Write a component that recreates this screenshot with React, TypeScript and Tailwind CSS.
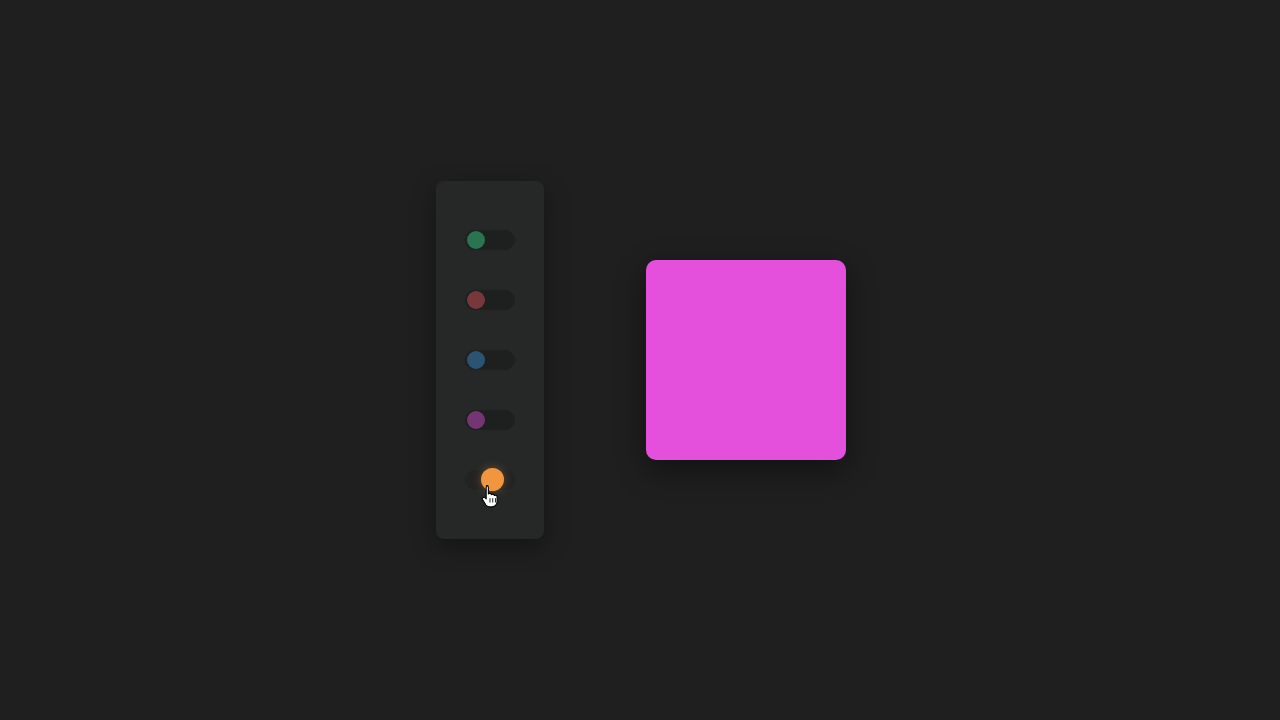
import React from 'react';

const knobs = [
    { id: 'green', color: 'bg-[#2a7452]' },
    { id: 'red', color: 'bg-[#76383b]' },
    { id: 'blue', color: 'bg-[#2b5473]' },
    { id: 'purple', color: 'bg-[#733673]' },
];

const Toggle: React.FC<{ color: string }> = ({ color }) => (
    <div className="relative w-[50px] h-[20px] rounded-full bg-[#1e1f1f] flex items-center pl-[2px]">
        <div className={`w-[18px] h-[18px] rounded-full ${color}`} />
    </div>
);

const HandCursor: React.FC = () => (
    <svg width="18" height="24" viewBox="0 0 16 22" className="absolute left-[16px] top-[14px]">
        <path
            d="M5 1.5c.8 0 1.5.7 1.5 1.5v6.2c.3-.4.8-.6 1.3-.6.8 0 1.4.5 1.5 1.2.3-.3.7-.5 1.2-.5.8 0 1.4.6 1.5 1.3.3-.2.6-.3 1-.3.9 0 1.5.7 1.5 1.5v4.2c0 2.8-2.2 5-5 5H8c-1.6 0-3-.8-3.9-2L1.3 14.4c-.4-.7-.2-1.6.5-2 .6-.4 1.4-.3 1.9.3l.8 1V3c0-.8.7-1.5 1.5-1.5z"
            fill="#ffffff"
            stroke="#000000"
            strokeWidth="1"
            strokeLinejoin="round"
        />
        <path d="M8 13v4M10.5 13v4M13 13v4" stroke="#000000" strokeWidth="0.8" />
    </svg>
);

export default function App() {
    return (
        <div className="w-full h-screen bg-[#1f1f1f] flex items-center justify-center gap-[102px]">
            <div className="ml-[2px] w-[108px] h-[358px] rounded-lg bg-[#262828] shadow-[0_8px_24px_rgba(0,0,0,0.35)] flex flex-col items-center py-[49px] gap-[40px]">
                {knobs.map((k) => (
                    <Toggle key={k.id} color={k.color} />
                ))}
                <div className="relative w-[50px] h-[20px] rounded-full bg-[#222323]">
                    <div className="absolute left-[16px] top-[-2px] w-[23px] h-[23px] rounded-full bg-[#f0963f] shadow-[0_0_10px_rgba(240,150,63,0.35)]" />
                    <HandCursor />
                </div>
            </div>
            <div className="w-[200px] h-[200px] rounded-[10px] bg-[#e450dc] shadow-[0_10px_30px_rgba(0,0,0,0.45)]" />
        </div>
    );
}
